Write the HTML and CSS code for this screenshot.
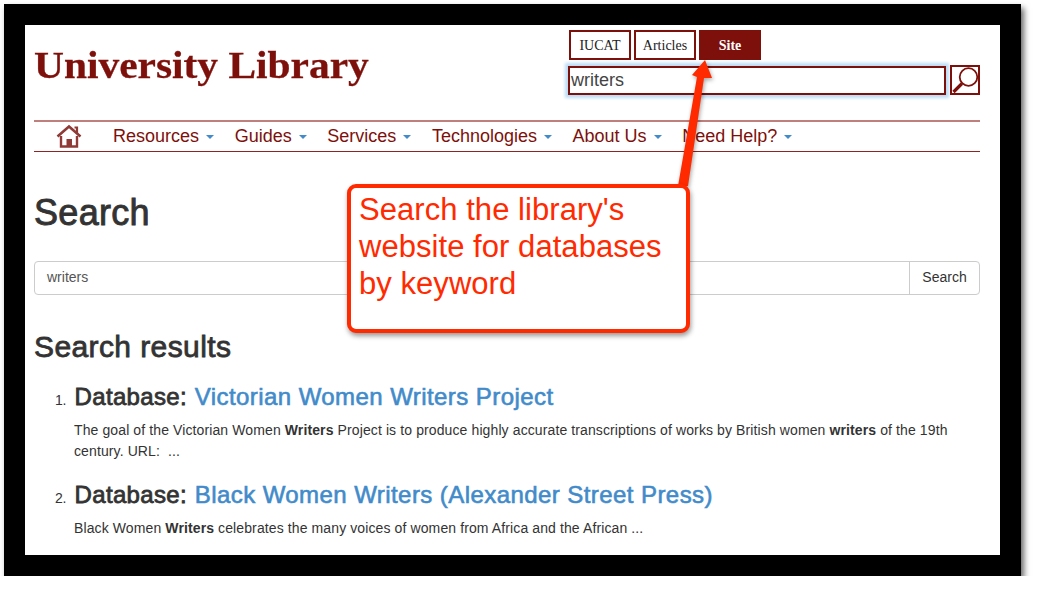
FILE: index.html
```html
<!DOCTYPE html>
<html lang="en">
<head>
<meta charset="utf-8">
<title>University Library Search</title>
<link rel="stylesheet" href="styles.css">
</head>
<body>
<div class="frame">
  <div class="page">
    <header class="masthead">
      <div class="brand">University Library</div>
      <div class="finder">
        <div class="tabs">
          <a class="tab">IUCAT</a>
          <a class="tab">Articles</a>
          <a class="tab tab-active">Site</a>
        </div>
        <div class="finder-row">
          <div class="finder-input">writers</div>
          <div class="finder-btn">
            <svg class="finder-icon" viewBox="0 0 30 30" width="30" height="30" aria-hidden="true">
              <circle cx="18.5" cy="12" r="8.8" fill="none" stroke="#7d100b" stroke-width="1.8"/>
              <path d="M12 18.5 L3.5 27" stroke="#7d100b" stroke-width="3.2" fill="none"/>
            </svg>
          </div>
        </div>
      </div>
    </header>
    <nav class="nav">
      <svg class="home" viewBox="0 0 26 24" width="26" height="24" aria-hidden="true">
        <path d="M1.5 12.5 L13 2.5 L24.5 12.5" fill="none" stroke="#8f3a36" stroke-width="2.6"/>
        <path d="M18.5 3.5 H21 V9" fill="none" stroke="#8f3a36" stroke-width="2.2"/>
        <path d="M5 12 V22.5 H21 V12" fill="none" stroke="#8f3a36" stroke-width="2.4"/>
        <rect x="10.5" y="15" width="5.5" height="7.5" fill="#8f3a36"/>
      </svg>
      <a class="nav-item">Resources<span class="caret"></span></a>
      <a class="nav-item">Guides<span class="caret"></span></a>
      <a class="nav-item">Services<span class="caret"></span></a>
      <a class="nav-item">Technologies<span class="caret"></span></a>
      <a class="nav-item">About Us<span class="caret"></span></a>
      <a class="nav-item">Need Help?<span class="caret"></span></a>
    </nav>
    <h1 class="title">Search</h1>
    <div class="search-group">
      <div class="search-field">writers</div>
      <div class="search-btn">Search</div>
    </div>
    <h2 class="subtitle">Search results</h2>
    <ol class="results">
      <li class="result">
        <h3 class="result-title"><span class="result-num">1.</span><span class="result-label">Database:</span> <a class="result-link">Victorian Women Writers Project</a></h3>
        <p class="result-text">The goal of the Victorian Women <b>Writers</b> Project is to produce highly accurate transcriptions of works by British women <b>writers</b> of the 19th century. URL:&nbsp; ...</p>
      </li>
      <li class="result">
        <h3 class="result-title"><span class="result-num">2.</span><span class="result-label">Database:</span> <a class="result-link">Black Women Writers (Alexander Street Press)</a></h3>
        <p class="result-text">Black Women <b>Writers</b> celebrates the many voices of women from Africa and the African ...</p>
      </li>
    </ol>
  </div>
  <svg class="arrow" viewBox="0 0 1037 592" width="1037" height="592" aria-hidden="true">
    <path d="M678 186 L697 77 L692 75 L705 60 L712 78 L704 78 L688 186 Z" fill="#ff2a00"/>
  </svg>
  <div class="callout">Search the library's website for databases by keyword</div>
</div>
</body>
</html>
```
FILE: styles.css
```css
html, body {
  margin: 0;
  padding: 0;
  background: #fff;
  overflow: hidden;
}
.frame {
  position: relative;
  width: 975px;
  height: 530px;
  margin: 4px 0 0 4px;
  border: 21px solid #000;
  box-shadow: 3px 4px 6px rgba(0, 0, 0, .6);
  background: #fff;
}
.page {
  height: 530px;
  overflow: hidden;
  padding: 5px 20px 0 9px;
  box-sizing: border-box;
  font-family: "Liberation Sans", Arial, sans-serif;
  color: #333;
}
.masthead {
  display: flex;
  justify-content: space-between;
  height: 90px;
}
.brand {
  font-family: "Liberation Serif", "Times New Roman", serif;
  font-weight: bold;
  font-size: 38px;
  line-height: 42px;
  color: #7d100b;
  margin: 14px 0 0 0;
  height: 42px;
  white-space: nowrap;
  transform: scaleX(1.09);
  transform-origin: left center;
  -webkit-text-stroke: .3px #7d100b;
}
.finder {
  width: 412px;
  display: flex;
  flex-direction: column;
}
.tabs {
  display: flex;
  gap: 3px;
  padding-left: 1px;
}
.tab {
  box-sizing: border-box;
  width: 62px;
  height: 30px;
  border: 2px solid #7d100b;
  font-family: "Liberation Serif", "Times New Roman", serif;
  font-size: 14px;
  line-height: 28px;
  text-align: center;
  color: #222;
}
.tab-active {
  background: #7d100b;
  color: #fff;
  font-weight: bold;
}
.finder-row {
  display: flex;
  justify-content: space-between;
  margin-top: 5px;
}
.finder-input {
  box-sizing: border-box;
  width: 378px;
  height: 29px;
  margin-top: 1px;
  border: 2px solid #7d100b;
  box-shadow: 0 0 3px 3px #bcdcf5;
  font-size: 18px;
  line-height: 25px;
  color: #444;
  padding-left: 1px;
}
.finder-btn {
  box-sizing: border-box;
  width: 30px;
  height: 30px;
  border: 2px solid #7d100b;
}
.finder-icon {
  display: block;
  margin: -2px;
}
.nav {
  display: flex;
  align-items: center;
  height: 32px;
  box-sizing: border-box;
  border-top: 2px solid #bf7f7c;
  border-bottom: 1px solid #8f2420;
  padding: 0 0 1px 22px;
}
.home {
  margin-right: 31px;
  flex: none;
}
.nav-item {
  font-size: 18px;
  color: #7d100b;
  margin-right: 20.6px;
  white-space: nowrap;
}
.caret {
  display: inline-block;
  width: 0;
  height: 0;
  margin-left: 7px;
  vertical-align: middle;
  border-top: 4px solid #428bca;
  border-left: 4px solid transparent;
  border-right: 4px solid transparent;
}
.title {
  margin: 40px 0 0;
  font-size: 36px;
  line-height: 42px;
  font-weight: normal;
  letter-spacing: .3px;
  -webkit-text-stroke: .9px #333;
  color: #333;
}
.search-group {
  display: flex;
  height: 34px;
  margin-top: 27px;
  box-sizing: border-box;
  border: 1px solid #ccc;
  border-radius: 4px;
  font-size: 14px;
  line-height: 31px;
  color: #555;
}
.search-field {
  flex: 1;
  padding-left: 12px;
}
.search-btn {
  width: 69px;
  text-align: center;
  color: #333;
  border-left: 1px solid #ccc;
}
.subtitle {
  margin: 34px 0 0;
  font-size: 30px;
  line-height: 36px;
  font-weight: normal;
  letter-spacing: .4px;
  -webkit-text-stroke: .8px #333;
}
.results {
  list-style: none;
  margin: 17px 0 0;
  padding: 0 0 0 40px;
  font-size: 14px;
}
.result {
  margin-bottom: 18px;
}
.result-title {
  margin: 0;
  font-size: 24px;
  line-height: 30px;
  font-weight: normal;
}
.result-num {
  display: inline-block;
  width: 19px;
  margin-left: -19px;
  font-size: 14px;
  letter-spacing: -.4px;
}
.result-label {
  margin-left: .5px;
  letter-spacing: .35px;
  -webkit-text-stroke: .8px #333;
}
.result-link {
  margin-left: 1px;
  color: #428bca;
  letter-spacing: .43px;
  -webkit-text-stroke: .6px #428bca;
}
.result-text {
  margin: 5px 0 0;
  font-size: 14px;
  line-height: 21px;
  letter-spacing: .11px;
  color: #333;
}
.arrow {
  position: absolute;
  left: -25px;
  top: -25px;
  filter: drop-shadow(1px 2px 2px rgba(0, 0, 0, .35));
  pointer-events: none;
}
.callout {
  position: absolute;
  left: 322px;
  top: 159px;
  width: 343px;
  height: 149px;
  box-sizing: border-box;
  border: 4px solid #ff2a00;
  border-radius: 9px;
  background: #fff;
  box-shadow: 1px 3px 5px rgba(0, 0, 0, .4);
  padding: 3px 8px;
  font-family: "Liberation Sans", Arial, sans-serif;
  font-size: 31px;
  line-height: 37px;
  letter-spacing: .05px;
  color: #ff2a00;
}
```
